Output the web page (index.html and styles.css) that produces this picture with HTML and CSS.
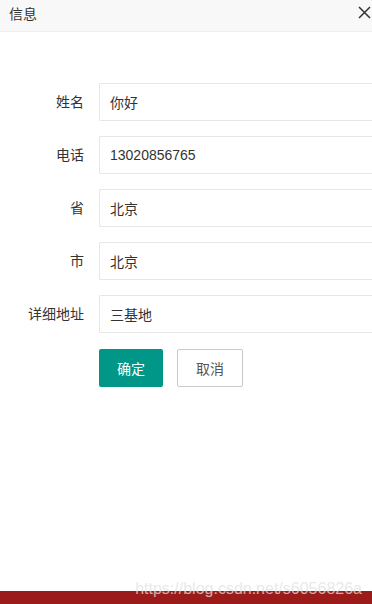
FILE: index.html
```html
<!DOCTYPE html>
<html lang="zh">
<head>
    <meta charset="UTF-8">
    <meta name="viewport" content="width=device-width, initial-scale=1.0">
    <title>信息</title>
    <link rel="stylesheet" href="styles.css">
</head>
<body>
    <div class="layer">
        <!-- 标题栏 -->
        <div class="layer-title">
            <span>信息</span>
            <svg class="layer-close" width="13" height="13" viewBox="0 0 13 13">
                <path d="M1 1 L12 12 M12 1 L1 12" stroke="#333" stroke-width="1.5" fill="none"/>
            </svg>
        </div>

        <!-- 表单 -->
        <form class="layer-form">
            <div class="form-item">
                <label class="form-label">姓名</label>
                <div class="input-block"><input class="form-input" type="text" value="你好"></div>
            </div>
            <div class="form-item">
                <label class="form-label">电话</label>
                <div class="input-block"><input class="form-input" type="text" value="13020856765"></div>
            </div>
            <div class="form-item">
                <label class="form-label">省</label>
                <div class="input-block"><input class="form-input" type="text" value="北京"></div>
            </div>
            <div class="form-item">
                <label class="form-label">市</label>
                <div class="input-block"><input class="form-input" type="text" value="北京"></div>
            </div>
            <div class="form-item">
                <label class="form-label">详细地址</label>
                <div class="input-block"><input class="form-input" type="text" value="三基地"></div>
            </div>
            <div class="form-item">
                <div class="form-label"></div>
                <div class="btn-row">
                    <button type="button" class="btn">确定</button>
                    <button type="button" class="btn btn-cancel">取消</button>
                </div>
            </div>
        </form>

        <div class="watermark">https://blog.csdn.net/s6056826a</div>
        <div class="bottom-bar"></div>
    </div>
</body>
</html>
```

FILE: styles.css
```css
/* 基础 */
body {
    margin: 0;
    overflow: hidden;
    font-family: "Liberation Sans", "Noto Sans CJK SC", sans-serif;
    font-size: 14px;
    color: #333;
    background-color: #fff;
}

.layer {
    position: relative;
    display: flex;
    flex-direction: column;
    height: 100vh;
}

/* 标题栏 */
.layer-title {
    display: flex;
    justify-content: space-between;
    align-items: center;
    height: 32px;
    box-sizing: border-box;
    padding: 0 1px 6px 9px;
    background-color: #f8f8f8;
    border-bottom: 1px solid #eee;
    color: #333;
}

.layer-close {
    display: block;
}

/* 表单 */
.layer-form {
    flex: 1;
    padding-top: 51px;
}

.form-item {
    display: flex;
    margin-bottom: 15px;
}

.form-label {
    width: 84px;
    padding-right: 15px;
    line-height: 38px;
    text-align: right;
    flex-shrink: 0;
}

.input-block {
    flex: 1;
}

/* 输入框右侧被窗口截断 */
.form-input {
    display: block;
    width: 100%;
    height: 38px;
    box-sizing: border-box;
    padding-left: 10px;
    border: 1px solid #e6e6e6;
    border-right: none;
    border-radius: 2px 0 0 2px;
    font-family: inherit;
    font-size: 14px;
    color: #333;
    outline: none;
}

.btn-row {
    display: flex;
    gap: 14px;
    margin-top: 1px;
}

.btn {
    height: 38px;
    padding: 0 18px;
    border: none;
    border-radius: 2px;
    background-color: #009688;
    color: #fff;
    font-family: inherit;
    font-size: 14px;
}

.btn-cancel {
    border: 1px solid #c9c9c9;
    background-color: #fff;
    color: #555;
}

/* 水印和底部 */
.watermark {
    position: absolute;
    right: 10px;
    bottom: 6px;
    font-size: 16px;
    color: rgba(225, 225, 225, 0.75);
}

.bottom-bar {
    height: 13px;
    background-color: #9b1b1b;
}
```
